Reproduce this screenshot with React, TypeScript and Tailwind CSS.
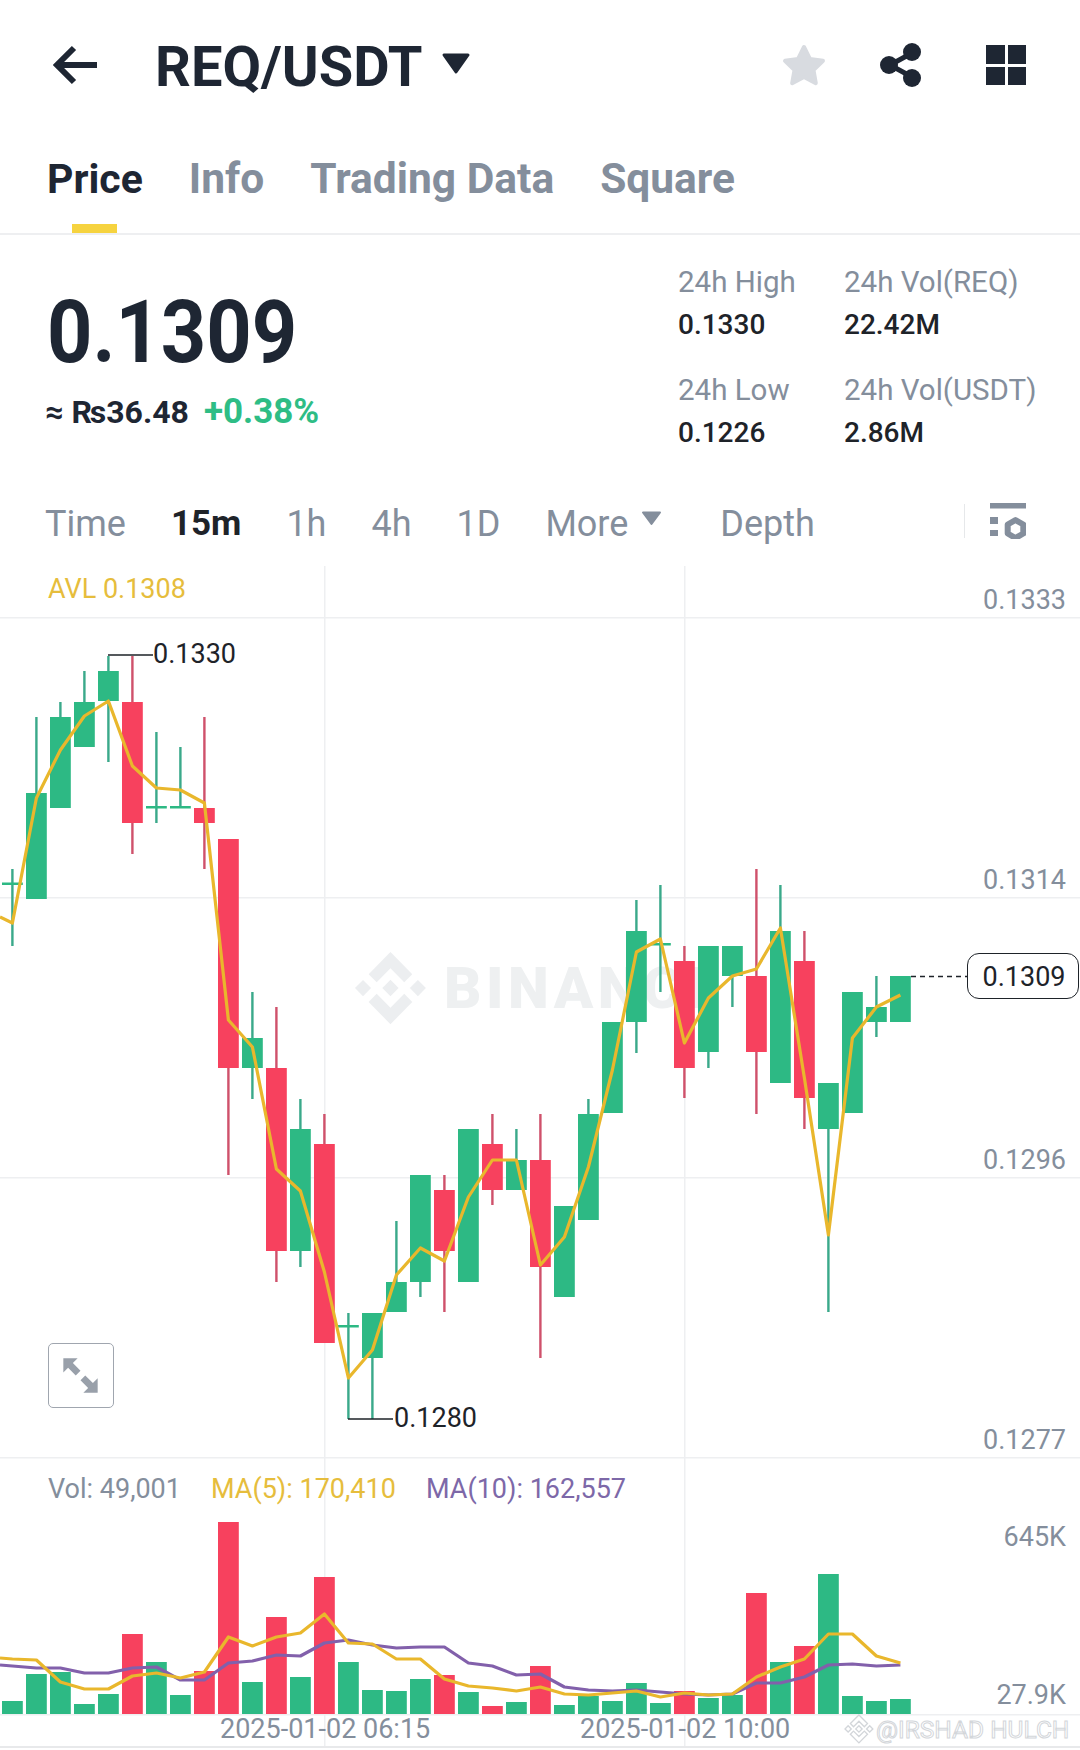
import React from 'react';

type Candle = [string, number, number, number, number];

// color, wick top, wick bottom, body top, body bottom (page y)
const candles: Candle[] = [
  ['g', 869, 946, 882.5, 885],
  ['g', 717, 899, 793, 899],
  ['g', 702, 808, 717, 808],
  ['g', 671, 747, 702, 747],
  ['g', 656, 762, 671, 701],
  ['r', 656, 854, 702, 823],
  ['g', 732, 823, 806, 808.5],
  ['g', 747, 807, 806, 808.5],
  ['r', 717, 869, 808, 823],
  ['r', 839, 1175, 839, 1068],
  ['g', 992, 1099, 1038, 1068],
  ['r', 1007, 1282, 1068, 1251],
  ['g', 1099, 1267, 1129, 1251],
  ['r', 1114, 1343, 1144, 1343],
  ['g', 1313, 1419, 1325, 1327.5],
  ['g', 1313, 1419, 1313, 1358],
  ['g', 1221, 1312, 1282, 1312],
  ['g', 1175, 1297, 1175, 1282],
  ['r', 1175, 1312, 1190, 1251],
  ['g', 1129, 1282, 1129, 1282],
  ['r', 1114, 1205, 1144, 1190],
  ['g', 1129, 1190, 1160, 1190],
  ['r', 1114, 1358, 1160, 1267],
  ['g', 1206, 1297, 1206, 1297],
  ['g', 1099, 1220, 1114, 1220],
  ['g', 1022, 1113, 1022, 1113],
  ['g', 900, 1053, 931, 1022],
  ['g', 885, 992, 943, 945.5],
  ['r', 946, 1098, 961, 1068],
  ['g', 946, 1068, 946, 1052],
  ['g', 946, 1007, 946, 976],
  ['r', 869, 1114, 976, 1052],
  ['g', 885, 1083, 931, 1083],
  ['r', 931, 1129, 961, 1098],
  ['g', 1083, 1312, 1083, 1129],
  ['g', 992, 1113, 992, 1113],
  ['g', 976, 1037, 1007, 1022],
  ['g', 976, 1022, 976, 1022],
];

const volumes: [string, number][] = [
  ['g', 1701], ['g', 1674], ['g', 1672], ['g', 1704], ['g', 1694], ['r', 1634], ['g', 1662], ['g', 1695],
  ['r', 1671], ['r', 1522], ['g', 1682], ['r', 1617], ['g', 1677], ['r', 1577], ['g', 1662], ['g', 1690],
  ['g', 1691], ['g', 1679], ['r', 1675], ['g', 1692], ['r', 1706], ['g', 1702], ['r', 1666], ['g', 1705],
  ['g', 1696], ['g', 1701], ['g', 1683], ['g', 1703], ['r', 1691], ['g', 1698], ['g', 1695], ['r', 1593],
  ['g', 1662], ['r', 1646], ['g', 1574], ['g', 1696], ['g', 1701], ['g', 1699],
];

const avgLine = [923, 798, 750, 716, 701, 766, 788, 790, 803, 1020, 1047, 1169, 1191, 1272, 1378, 1350, 1275, 1248, 1261, 1197, 1160, 1160, 1265, 1237, 1167, 1070, 952, 939, 1043, 998, 976, 969, 928, 1078, 1235, 1038, 1007, 995];
const ma5 = [1659, 1660, 1682, 1689, 1689, 1676, 1673, 1678, 1672, 1637, 1646, 1637, 1633, 1614, 1643, 1644, 1659, 1659, 1679, 1686, 1688, 1691, 1687, 1694, 1695, 1693, 1691, 1697, 1693, 1695, 1694, 1677, 1667, 1659, 1634, 1634, 1656, 1663];
const ma10 = [1666, 1668, 1668, 1673, 1673, 1668, 1667, 1680, 1680, 1663, 1661, 1655, 1656, 1643, 1640, 1645, 1648, 1647, 1647, 1663, 1666, 1675, 1674, 1687, 1690, 1691, 1690, 1692, 1694, 1695, 1694, 1683, 1683, 1677, 1665, 1664, 1666, 1665];

const cx = (i: number) => 12.4 + i * 24;

const toPoints = (ys: number[], startY: number) =>
  `0,${startY} ` + ys.map((y, i) => `${cx(i)},${y}`).join(' ');

const logo =
  'M38.73 53.2l24.59-24.58 24.6 24.6 14.3-14.31L63.32 0 24.43 38.9l14.3 14.3zM0 63.31l14.3-14.31 14.31 14.31-14.31 14.3zM38.73 73.41l24.59 24.59 24.6-24.6 14.31 14.29-38.9 38.91-38.91-38.88-.02-.02 14.32-14.29zM98 63.31l14.3-14.3 14.31 14.3-14.31 14.31zM77.83 63.3L63.32 48.78 52.59 59.51l-1.24 1.23-2.54 2.54 14.51 14.52 14.51-14.5z';

function ChartDrawing() {
  return (
    <svg className="absolute inset-0 w-[1080px] h-[1184px]" viewBox="0 566 1080 1184">
      {[617, 897, 1177, 1457].map((y) => (
        <rect key={y} x="0" y={y} width="1080" height="1.5" fill="#eeeff1" />
      ))}
      <rect x="324" y="566" width="1.5" height="1180" fill="#eeeff1" />
      <rect x="684" y="566" width="1.5" height="1180" fill="#eeeff1" />
      <rect x="0" y="1714" width="1080" height="1.5" fill="#eeeff1" />

      <path d={logo} transform="translate(355 952) scale(0.56 0.57)" fill="#eceef0" />
      <text x="444" y="1008" fontFamily="Roboto, sans-serif" fontWeight="900" fontSize="58" letterSpacing="4.5" fill="#eef0f1">
        BINANCE
      </text>

      {candles.map(([c, wt, wb, bt, bb], i) => (
        <g key={i}>
          <rect x={cx(i) - 1.2} y={wt} width="2.4" height={wb - wt} fill={c === 'g' ? '#3aa98a' : '#cf516b'} />
          <rect x={cx(i) - 10.4} y={bt} width="20.8" height={bb - bt} fill={c === 'g' ? '#2db984' : '#f7415e'} />
        </g>
      ))}
      <polyline points={toPoints(avgLine, 917)} fill="none" stroke="#e9b72c" strokeWidth="3.2" strokeLinejoin="round" />

      <path d="M108 655H153M348 1419H393" stroke="#1e2329" strokeWidth="1.5" fill="none" />
      <path d="M911 976.5H967" stroke="#1e2329" strokeWidth="1.5" strokeDasharray="5 4" fill="none" />

      {volumes.map(([c, top], i) => (
        <rect key={i} x={cx(i) - 10.4} y={top} width="20.8" height={1714 - top} fill={c === 'g' ? '#2db984' : '#f7415e'} />
      ))}
      <polyline points={toPoints(ma10, 1665)} fill="none" stroke="#8260ab" strokeWidth="3.2" strokeLinejoin="round" />
      <polyline points={toPoints(ma5, 1658)} fill="none" stroke="#e9b72c" strokeWidth="3.2" strokeLinejoin="round" />

      <path d={logo} transform="translate(845 1715) scale(0.22)" fill="#fff" stroke="#d3d6da" strokeWidth="6" />
    </svg>
  );
}

function StatCell({ label, value, low }: { label: string; value: string; low?: boolean }) {
  return (
    <div className={low ? 'mt-[22.5px]' : ''}>
      <div className="text-[29.5px] leading-[43px] text-[#848e9c]">{label}</div>
      <div className="text-[28px] leading-[42px] font-medium text-[#1e2329]">{value}</div>
    </div>
  );
}

export default function App() {
  return (
    <div className="w-[1080px] h-[1750px] bg-white overflow-hidden [font-family:Roboto,sans-serif] text-[#1e2633]">
      {/* top bar */}
      <div className="h-[130px] flex items-center pl-[52px] pr-[54px]">
        <svg width="46" height="40" viewBox="0 0 46 40" fill="none" stroke="#1e2633" strokeWidth="6">
          <path d="M45 20H5M22 3L5 20l17 17" />
        </svg>
        <span className="ml-[57px] mt-[3px] text-[56px] leading-none font-bold">REQ/USDT</span>
        <svg className="ml-[19px] mb-[2px]" width="30" height="22" viewBox="0 0 30 22">
          <path d="M3 2H27L15 19Z" fill="#1e2633" stroke="#1e2633" strokeWidth="3" strokeLinejoin="round" />
        </svg>
        <div className="ml-auto flex items-center">
          <svg width="46" height="46" viewBox="0 0 46 46">
            <polygon
              points="23,5 28.9,16.9 42,18.8 32.5,28.1 34.8,41.2 23,35 11.2,41.2 13.5,28.1 4,18.8 17.1,16.9"
              fill="#d8dbe0"
              stroke="#d8dbe0"
              strokeWidth="4"
              strokeLinejoin="round"
            />
          </svg>
          <svg className="ml-[52px]" width="44" height="46" viewBox="0 0 44 46" fill="#1e2633" stroke="#1e2633">
            <path d="M33 11L11 23l22 12" fill="none" strokeWidth="5" />
            <circle cx="33" cy="10" r="9" stroke="none" />
            <circle cx="10" cy="23" r="9" stroke="none" />
            <circle cx="33" cy="36" r="9" stroke="none" />
          </svg>
          <div className="ml-[63px] grid grid-cols-2 gap-[3px]">
            <div className="w-[18.5px] h-[18.5px] bg-[#1e2633]" />
            <div className="w-[18.5px] h-[18.5px] bg-[#1e2633]" />
            <div className="w-[18.5px] h-[18.5px] bg-[#1e2633]" />
            <div className="w-[18.5px] h-[18.5px] bg-[#1e2633]" />
          </div>
        </div>
      </div>

      {/* tabs */}
      <div className="h-[105px] border-b-2 border-[#eeeff1] pl-[47px] pt-[29px] flex gap-[46px] text-[42.5px] leading-[40px] font-bold text-[#848e9c]">
        <div className="flex flex-col items-center">
          <span className="text-[41px] text-[#1e2633]">Price</span>
          <div className="mt-[25px] w-[45px] h-[9px] bg-[#f6d33f]" />
        </div>
        <span>Info</span>
        <span>Trading Data</span>
        <span>Square</span>
      </div>

      {/* price and 24h stats */}
      <div className="h-[245px] flex">
        <div className="w-[678px] pl-[47px] pt-[53px]">
          <div className="text-[88px] leading-[88px] font-bold origin-left scale-x-[0.9]">0.1309</div>
          <div className="mt-[20px] -ml-[2px] flex items-center gap-[15px] text-[32px] leading-[32px] font-bold">
            <span>≈ ₨36.48</span>
            <span className="text-[35px] text-[#2ebd85]">+0.38%</span>
          </div>
        </div>
        <div className="pt-[26px] grid grid-cols-[166px_auto] content-start">
          <div>
            <StatCell label="24h High" value="0.1330" />
            <StatCell label="24h Low" value="0.1226" low />
          </div>
          <div>
            <StatCell label="24h Vol(REQ)" value="22.42M" />
            <StatCell label="24h Vol(USDT)" value="2.86M" low />
          </div>
        </div>
      </div>

      {/* timeframes */}
      <div className="h-[86px] pt-[2px] pl-[45px] pr-[54px] flex items-center gap-[45px] text-[36px] text-[#848e9c] leading-[84px]">
        <span>Time</span>
        <span className="font-bold text-[#1e2329] text-[35px]">15m</span>
        <span>1h</span>
        <span>4h</span>
        <span>1D</span>
        <span className="flex items-center gap-[13px]">
          More
          <svg className="mb-[12px]" width="21" height="15" viewBox="0 0 21 15">
            <path d="M2 1.5H19L10.5 13Z" fill="#848e9c" stroke="#848e9c" strokeWidth="2" strokeLinejoin="round" />
          </svg>
        </span>
        <span className="ml-[13px]">Depth</span>
        <div className="ml-auto flex items-center gap-[25px] mb-[6px]">
          <div className="w-[1.5px] h-[34px] bg-[#e6e8ea]" />
          <svg width="36" height="36" viewBox="0 0 36 36" fill="#848e9c">
            <rect x="0" y="0" width="36" height="5.5" />
            <rect x="0" y="14" width="8" height="7" />
            <rect x="0" y="27" width="8" height="6" />
            <path d="M25.5 17l7.8 4.5v9L25.5 35l-7.8-4.5v-9z" fill="none" stroke="#848e9c" strokeWidth="6" strokeLinejoin="round" />
          </svg>
        </div>
      </div>

      {/* chart */}
      <div className="relative h-[1184px] text-[27px] leading-[27px] text-[#848e9c]">
        <ChartDrawing />
        <span className="absolute left-[48px] top-[10px] text-[#e6bd3c]">AVL 0.1308</span>
        <span className="absolute right-[14px] top-[21px]">0.1333</span>
        <span className="absolute left-[153px] top-[75px] text-[#1e2329]">0.1330</span>
        <span className="absolute right-[14px] top-[301px]">0.1314</span>
        <span className="absolute right-[14px] top-[581px]">0.1296</span>
        <span className="absolute right-[14px] top-[861px]">0.1277</span>
        <span className="absolute left-[394px] top-[839px] text-[#1e2329]">0.1280</span>
        <div className="absolute left-[967px] top-[387px] w-[112px] h-[46px] pl-[2px] pt-[2px] flex items-center justify-center bg-white border-[1.5px] border-[#1e2329] rounded-[12px] text-[#1e2329]">
          0.1309
        </div>
        <div className="absolute left-[48px] top-[777px] w-[66px] h-[65px] border-[1.5px] border-[#a0a6af] rounded-[5px] bg-white">
          <svg width="63" height="62" viewBox="0 0 66 65" fill="#99a0aa">
            <path d="M15 15H30L25 20L33 28L28 33L20 25L15 30Z" />
            <path d="M51 51H36L41 46L33 38L38 33L46 41L51 36Z" />
          </svg>
        </div>
        <span className="absolute left-[48px] top-[910px]">Vol: 49,001</span>
        <span className="absolute left-[211px] top-[910px] text-[#e6bd3c]">MA(5): 170,410</span>
        <span className="absolute left-[426px] top-[910px] text-[#7d68a8]">MA(10): 162,557</span>
        <span className="absolute right-[14px] top-[958px]">645K</span>
        <span className="absolute right-[14px] top-[1116px]">27.9K</span>
        <span className="absolute left-[220px] top-[1150px]">2025-01-02 06:15</span>
        <span className="absolute left-[580px] top-[1150px]">2025-01-02 10:00</span>
        <span className="absolute left-[876px] top-[1150px] whitespace-nowrap text-[24.5px] text-white [-webkit-text-stroke:1px_#d3d6da]">@IRSHAD HULCH</span>
        <div className="absolute left-0 top-[1179.5px] w-full h-[2px] bg-[#e8e9eb]" />
      </div>
    </div>
  );
}
